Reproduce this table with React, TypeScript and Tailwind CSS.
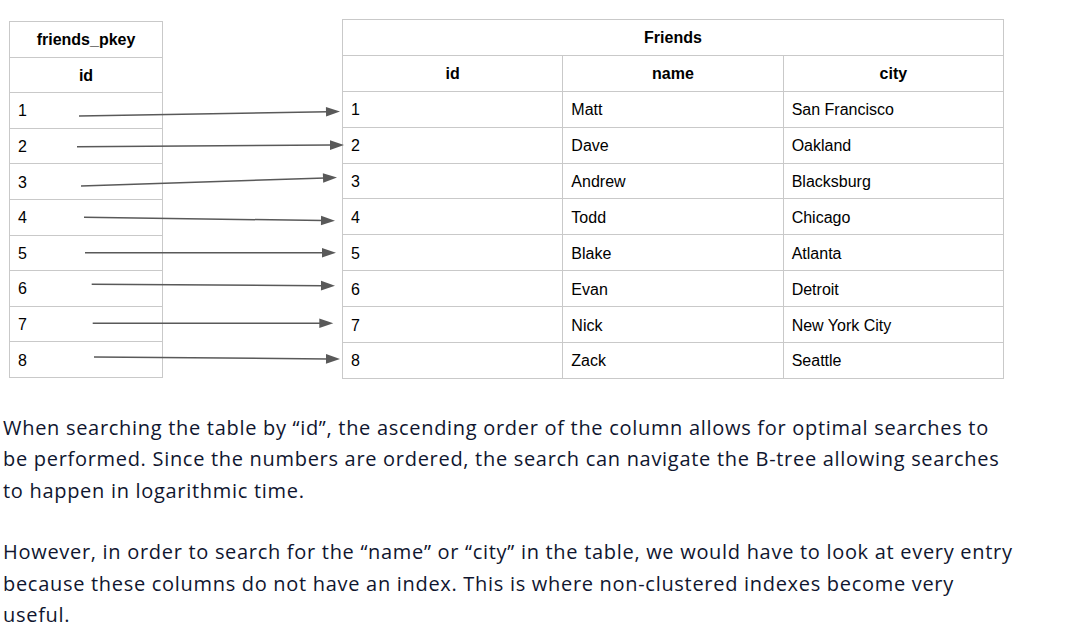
import React from 'react';

const rows = [
  { id: 1, name: 'Matt', city: 'San Francisco' },
  { id: 2, name: 'Dave', city: 'Oakland' },
  { id: 3, name: 'Andrew', city: 'Blacksburg' },
  { id: 4, name: 'Todd', city: 'Chicago' },
  { id: 5, name: 'Blake', city: 'Atlanta' },
  { id: 6, name: 'Evan', city: 'Detroit' },
  { id: 7, name: 'Nick', city: 'New York City' },
  { id: 8, name: 'Zack', city: 'Seattle' },
];

// start -> tip, in page coordinates
const arrows: [number, number, number, number][] = [
  [79, 116, 340, 111.5],
  [77, 146.7, 344, 145],
  [81, 186, 337, 177.5],
  [84, 217.3, 335, 220.7],
  [85, 252.7, 336, 252.7],
  [91.7, 284.3, 335, 285.7],
  [92.7, 323.3, 333.3, 323.3],
  [94, 357, 340, 359],
];

const Arrow = ({ a }: { a: [number, number, number, number] }) => {
  const [x1, y1, x2, y2] = a;
  const len = Math.hypot(x2 - x1, y2 - y1);
  const ux = (x2 - x1) / len;
  const uy = (y2 - y1) / len;
  const head = 14;
  const half = 4.8;
  const bx = x2 - ux * head;
  const by = y2 - uy * head;
  const pts = `${x2},${y2} ${bx - uy * half},${by + ux * half} ${bx + uy * half},${by - ux * half}`;
  return (
    <g>
      <line x1={x1} y1={y1} x2={bx + ux * 2} y2={by + uy * 2} stroke="#595959" strokeWidth={1.5} />
      <polygon points={pts} fill="#595959" />
    </g>
  );
};

export default function App() {
  return (
    <div className="w-[1090px] h-[625px] bg-white overflow-hidden">
      {/* diagram */}
      <div className="relative flex items-start pt-[19px] pl-[9px] font-['Liberation_Sans',Arial,sans-serif] text-[16px] text-black">
        <div className="mt-[2px] w-[154px] border-t border-l border-[#c9c9c9]">
          <div className="h-[35.6px] pt-[2px] border-r border-b border-[#c9c9c9] flex items-center justify-center font-bold">friends_pkey</div>
          <div className="h-[35.6px] pt-[2px] border-r border-b border-[#c9c9c9] flex items-center justify-center font-bold">id</div>
          {rows.map((r) => (
            <div key={r.id} className="h-[35.6px] pt-[2px] border-r border-b border-[#c9c9c9] flex items-center pl-[8px]">
              {r.id}
            </div>
          ))}
        </div>

        <div className="ml-[179px] w-[662px] grid grid-cols-3 border-t border-l border-[#c9c9c9]">
          <div className="col-span-3 h-[35.9px] pt-[2px] border-r border-b border-[#c9c9c9] flex items-center justify-center font-bold">Friends</div>
          <div className="h-[35.9px] pt-[2px] border-r border-b border-[#c9c9c9] flex items-center justify-center font-bold">id</div>
          <div className="h-[35.9px] pt-[2px] border-r border-b border-[#c9c9c9] flex items-center justify-center font-bold">name</div>
          <div className="h-[35.9px] pt-[2px] border-r border-b border-[#c9c9c9] flex items-center justify-center font-bold">city</div>
          {rows.map((r) => (
            <React.Fragment key={r.id}>
              <div className="h-[35.9px] pt-[2px] border-r border-b border-[#c9c9c9] flex items-center pl-[8px]">{r.id}</div>
              <div className="h-[35.9px] pt-[2px] border-r border-b border-[#c9c9c9] flex items-center pl-[8px]">{r.name}</div>
              <div className="h-[35.9px] pt-[2px] border-r border-b border-[#c9c9c9] flex items-center pl-[8px]">{r.city}</div>
            </React.Fragment>
          ))}
        </div>

        <svg className="absolute left-0 top-0 pointer-events-none" width={1090} height={400}>
          {arrows.map((a, i) => (
            <Arrow key={i} a={a} />
          ))}
        </svg>
      </div>

      {/* text */}
      <div className="mt-[33px] pl-[3px] w-[1019px] font-['Open_Sans',sans-serif] text-[20px] tracking-[0.7px] leading-[31.5px] text-[#10162f]">
        <p>
          When searching the table by “id”, the ascending order of the column allows for optimal searches to be performed. Since the numbers are ordered, the search can navigate the B-tree allowing searches to happen in logarithmic time.
        </p>
        <p className="mt-[30px]">
          However, in order to search for the “name” or “city” in the table, we would have to look at every entry because these columns do not have an index. This is where non-clustered indexes become very useful.
        </p>
      </div>
    </div>
  );
}
